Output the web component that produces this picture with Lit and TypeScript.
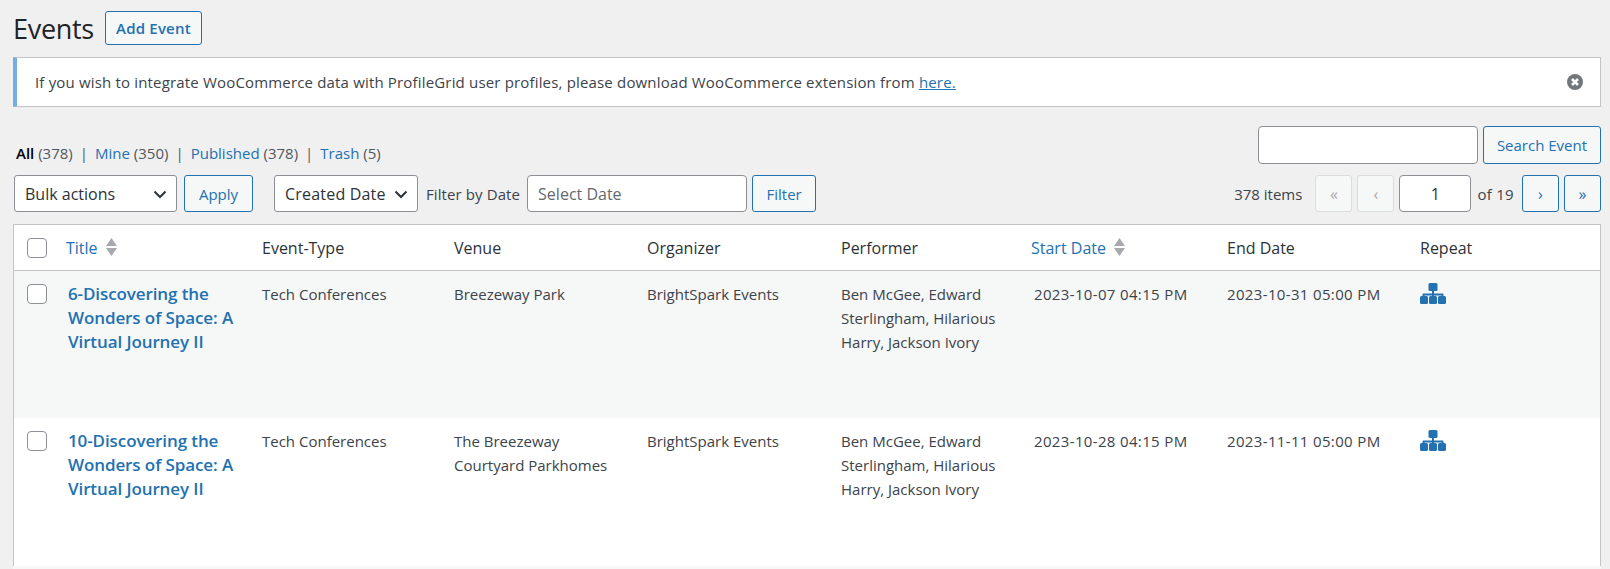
import { LitElement, html, css, svg } from 'lit'
import { customElement } from 'lit/decorators.js'

const rows = [
	{
		title: '6-Discovering the Wonders of Space: A Virtual Journey II',
		type: 'Tech Conferences',
		venue: 'Breezeway Park',
		organizer: 'BrightSpark Events',
		performer: 'Ben McGee, Edward Sterlingham, Hilarious Harry, Jackson Ivory',
		start: '2023-10-07 04:15 PM',
		end: '2023-10-31 05:00 PM',
	},
	{
		title: '10-Discovering the Wonders of Space: A Virtual Journey II',
		type: 'Tech Conferences',
		venue: 'The Breezeway Courtyard Parkhomes',
		organizer: 'BrightSpark Events',
		performer: 'Ben McGee, Edward Sterlingham, Hilarious Harry, Jackson Ivory',
		start: '2023-10-28 04:15 PM',
		end: '2023-11-11 05:00 PM',
	},
]

const chevron = svg`<svg class="chev" width="16" height="16" viewBox="0 0 16 16"><path d="M2.5 5.5 8 11l5.500-5.500" fill="none" stroke="#2c3338" stroke-width="2"/></svg>`

const sitemap = svg`<svg class="sitemap" width="26" height="21" viewBox="0 0 26 21" fill="#2271b1">
	<rect x="8.500" y="0" width="9" height="8" rx="1.500"/>
	<rect x="0" y="13" width="8" height="8" rx="1.500"/>
	<rect x="9" y="13" width="8" height="8" rx="1.500"/>
	<rect x="18" y="13" width="8" height="8" rx="1.500"/>
	<path d="M12 8h2v2.500h8.500a1 1 0 0 1 1 1V13h-2v-.5H14V13h-2v-.5H4.500V13h-2v-1.500a1 1 0 0 1 1-1H12z"/>
</svg>`

const sortArrows = svg`<svg class="sort" width="11" height="18" viewBox="0 0 11 18" fill="#a7aaad"><path d="M5.500 0 11 8H0zM0 10h11l-5.500 8z"/></svg>`

@customElement('app-root')
export class AppRoot extends LitElement {
	static styles = css`
		:host {
			display: block;
			background: #f0f0f1;
			height: 569px;
			overflow: hidden;
			font-family: 'Open Sans', 'Noto Sans', sans-serif;
			font-size: 15px;
			color: #3c434a;
		}

		a {
			color: #2271b1;
			text-decoration: none;
		}

		.wrap {
			padding: 11px 9px 0 13px;
		}

		.heading {
			display: flex;
			align-items: center;
			gap: 11px;
			height: 34px;
		}

		h1 {
			margin: 0;
			font-size: 27px;
			font-weight: 400;
			color: #1d2327;
			letter-spacing: -0.3px;
		}

		.btn {
			display: inline-flex;
			align-items: center;
			justify-content: center;
			box-sizing: border-box;
			border: 1px solid #2271b1;
			border-radius: 3px;
			background: #f6f7f7;
			color: #2271b1;
		}

		.add {
			width: 97px;
			height: 34px;
			font-weight: 600;
			letter-spacing: 0.2px;
		}

		.notice {
			display: flex;
			align-items: center;
			justify-content: space-between;
			box-sizing: border-box;
			height: 50px;
			margin-top: 12px;
			padding: 0 17px 0 18px;
			background: #fff;
			border: 1px solid #c3c4c7;
			border-left: 4px solid #72aee6;
			letter-spacing: 0.17px;
		}

		.notice a {
			text-decoration: underline;
		}

		.close {
			display: block;
		}

		.upper {
			display: flex;
			justify-content: space-between;
			align-items: flex-start;
			margin-top: 19px;
		}

		.subsubsub {
			display: flex;
			gap: 7px;
			padding: 17px 0 0 3px;
			line-height: 20px;
			white-space: pre;
			color: #50575e;
		}

		.subsubsub b {
			color: #000;
			font-weight: 600;
		}

		.search {
			display: flex;
			gap: 5px;
		}

		.field {
			box-sizing: border-box;
			border: 1px solid #8c8f94;
			border-radius: 4px;
			background: #fff;
			height: 38px;
		}

		.search .field {
			width: 220px;
		}

		.search .btn {
			width: 118px;
			height: 38px;
		}

		.tablenav {
			display: flex;
			align-items: center;
			justify-content: space-between;
			margin-top: 11px;
			height: 37px;
		}

		.actions,
		.pages {
			display: flex;
			align-items: center;
		}

		.select {
			display: flex;
			align-items: center;
			justify-content: space-between;
			box-sizing: border-box;
			height: 37px;
			padding: 0 8px 0 10px;
			border: 1px solid #8c8f94;
			border-radius: 3px;
			background: #fff;
			font-size: 16px;
			color: #2c3338;
			margin-left: 1px;
			white-space: nowrap;
		}

		.bulk {
			width: 163px;
		}

		.created {
			width: 144px;
			margin-left: 21px;
			letter-spacing: 0.2px;
		}

		.apply {
			width: 69px;
			height: 37px;
			margin-left: 7px;
		}

		.filter-label {
			margin: 0 7px 0 8px;
			letter-spacing: 0.1px;
		}

		.date {
			display: flex;
			align-items: center;
			box-sizing: border-box;
			width: 220px;
			height: 37px;
			padding-left: 10px;
			font-size: 16px;
			color: #646970;
		}

		.filter {
			width: 64px;
			height: 37px;
			margin-left: 5px;
		}

		.pages .count {
			margin-right: 8px;
		}

		.page-btn {
			box-sizing: border-box;
			display: flex;
			align-items: center;
			justify-content: center;
			width: 37px;
			height: 37px;
			border: 1px solid #2271b1;
			border-radius: 3px;
			background: #f6f7f7;
			color: #2271b1;
			font-size: 16px;
			margin-left: 5px;
		}

		.page-btn.off {
			border-color: #dcdcde;
			color: #a7aaad;
		}

		.pages .current {
			display: flex;
			align-items: center;
			justify-content: center;
			width: 72px;
			height: 37px;
			margin: 0 6px 0 5px;
			font-size: 16px;
			color: #2c3338;
		}

		.pages .of {
			margin-right: 3px;
			letter-spacing: 0.3px;
		}

		table {
			width: 100%;
			margin-top: 12px;
			table-layout: fixed;
			border-collapse: separate;
			border-spacing: 0;
			background: #fff;
			border: 1px solid #c3c4c7;
			border-bottom: 0;
		}

		th {
			height: 45px;
			padding: 0 8px;
			font-size: 16px;
			font-weight: 400;
			text-align: left;
			color: #2c3338;
			border-bottom: 1px solid #c3c4c7;
			white-space: nowrap;
		}

		th a {
			display: inline-flex;
			align-items: center;
			gap: 8px;
		}

		td {
			height: 148px;
			padding: 10.500px 8px 0;
			vertical-align: top;
			box-sizing: border-box;
			line-height: 24px;
		}

		.sort {
			margin-top: -2px;
		}

		tr.alt td {
			height: 147px;
			background: #f6f7f7;
		}

		.check {
			display: block;
			box-sizing: border-box;
			width: 20px;
			height: 20px;
			border: 1px solid #8c8f94;
			border-radius: 4px;
			background: #fff;
		}

		.cb {
			padding: 0 0 0 13px;
		}

		td.cb {
			padding-top: 13px;
		}

		td.title {
			padding: 11px 8px 0 10px;
		}

		.title a {
			font-size: 17px;
			font-weight: 600;
			letter-spacing: -0.1px;
		}

		td.venue {
			padding-right: 22px;
		}

		td.start {
			padding-left: 11px;
		}

		td.date-cell {
			letter-spacing: 0.35px;
			white-space: nowrap;
		}

		.sitemap {
			display: block;
			margin-top: 1px;
		}

		.tail {
			height: 10px;
			background: #f6f7f7;
		}
	`

	render() {
		return html`
			<div class="wrap">
				<div class="heading">
					<h1>Events</h1>
					<a class="btn add">Add Event</a>
				</div>

				<div class="notice">
					<span>If you wish to integrate WooCommerce data with ProfileGrid user profiles, please download WooCommerce extension from <a>here.</a></span>
					<svg class="close" width="16" height="16" viewBox="0 0 16 16">
						<circle cx="8" cy="8" r="8" fill="#72777c" />
						<path d="M5 5l6 6M11 5l-6 6" stroke="#fff" stroke-width="2.600" />
					</svg>
				</div>

				<div class="upper">
					<div class="subsubsub">
						<span><b>All</b> (378)</span><span>|</span>
						<span><a>Mine</a> (350)</span><span>|</span>
						<span><a>Published</a> (378)</span><span>|</span>
						<span><a>Trash</a> (5)</span>
					</div>
					<div class="search">
						<div class="field"></div>
						<a class="btn">Search Event</a>
					</div>
				</div>

				<div class="tablenav">
					<div class="actions">
						<div class="select bulk">Bulk actions ${chevron}</div>
						<a class="btn apply">Apply</a>
						<div class="select created">Created Date ${chevron}</div>
						<span class="filter-label">Filter by Date</span>
						<div class="field date">Select Date</div>
						<a class="btn filter">Filter</a>
					</div>
					<div class="pages">
						<span class="count">378 items</span>
						<span class="page-btn off">«</span>
						<span class="page-btn off">‹</span>
						<div class="field current">1</div>
						<span class="of">of 19</span>
						<span class="page-btn">›</span>
						<span class="page-btn">»</span>
					</div>
				</div>

				<table>
					<colgroup>
						<col style="width:44px" />
						<col style="width:196px" />
						<col style="width:192px" />
						<col style="width:193px" />
						<col style="width:194px" />
						<col style="width:190px" />
						<col style="width:196px" />
						<col style="width:193px" />
						<col />
					</colgroup>
					<thead>
						<tr>
							<th class="cb"><span class="check"></span></th>
							<th><a>Title ${sortArrows}</a></th>
							<th>Event-Type</th>
							<th>Venue</th>
							<th>Organizer</th>
							<th>Performer</th>
							<th><a>Start Date ${sortArrows}</a></th>
							<th>End Date</th>
							<th>Repeat</th>
						</tr>
					</thead>
					<tbody>
						${rows.map(
							(r, i) => html`
								<tr class=${i % 2 === 0 ? 'alt' : ''}>
									<td class="cb"><span class="check"></span></td>
									<td class="title"><a>${r.title}</a></td>
									<td>${r.type}</td>
									<td class="venue">${r.venue}</td>
									<td>${r.organizer}</td>
									<td>${r.performer}</td>
									<td class="start date-cell">${r.start}</td>
									<td class="date-cell">${r.end}</td>
									<td>${sitemap}</td>
								</tr>
							`,
						)}
					</tbody>
				</table>
				<div class="tail"></div>
			</div>
		`
	}
}
